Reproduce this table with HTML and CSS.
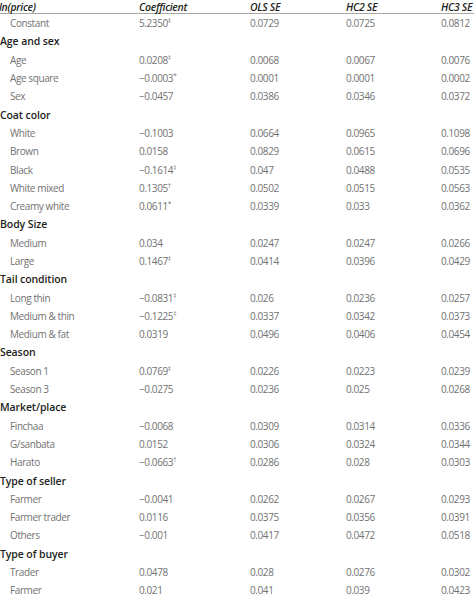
FILE: index.html
```html
<!DOCTYPE html>
<html>
<head>
<meta charset="utf-8">
<link rel="stylesheet" href="styles.css">
</head>
<body>
<div class="table">
  <div class="row head"><div>ln(price)</div><div>Coefficient</div><div>OLS SE</div><div>HC2 SE</div><div>HC3 SE</div></div>
  <div class="row item"><div>Constant</div><div>5.2350<sup>‡</sup></div><div>0.0729</div><div>0.0725</div><div>0.0812</div></div>
  <div class="row cat"><div>Age and sex</div></div>
  <div class="row item"><div>Age</div><div>0.0208<sup>‡</sup></div><div>0.0068</div><div>0.0067</div><div>0.0076</div></div>
  <div class="row item"><div>Age square</div><div>−0.0003<sup>*</sup></div><div>0.0001</div><div>0.0001</div><div>0.0002</div></div>
  <div class="row item"><div>Sex</div><div>−0.0457</div><div>0.0386</div><div>0.0346</div><div>0.0372</div></div>
  <div class="row cat"><div>Coat color</div></div>
  <div class="row item"><div>White</div><div>−0.1003</div><div>0.0664</div><div>0.0965</div><div>0.1098</div></div>
  <div class="row item"><div>Brown</div><div>0.0158</div><div>0.0829</div><div>0.0615</div><div>0.0696</div></div>
  <div class="row item"><div>Black</div><div>−0.1614<sup>‡</sup></div><div>0.047</div><div>0.0488</div><div>0.0535</div></div>
  <div class="row item"><div>White mixed</div><div>0.1305<sup>†</sup></div><div>0.0502</div><div>0.0515</div><div>0.0563</div></div>
  <div class="row item"><div>Creamy white</div><div>0.0611<sup>*</sup></div><div>0.0339</div><div>0.033</div><div>0.0362</div></div>
  <div class="row cat"><div>Body Size</div></div>
  <div class="row item"><div>Medium</div><div>0.034</div><div>0.0247</div><div>0.0247</div><div>0.0266</div></div>
  <div class="row item"><div>Large</div><div>0.1467<sup>‡</sup></div><div>0.0414</div><div>0.0396</div><div>0.0429</div></div>
  <div class="row cat"><div>Tail condition</div></div>
  <div class="row item"><div>Long thin</div><div>−0.0831<sup>‡</sup></div><div>0.026</div><div>0.0236</div><div>0.0257</div></div>
  <div class="row item"><div>Medium &amp; thin</div><div>−0.1225<sup>‡</sup></div><div>0.0337</div><div>0.0342</div><div>0.0373</div></div>
  <div class="row item"><div>Medium &amp; fat</div><div>0.0319</div><div>0.0496</div><div>0.0406</div><div>0.0454</div></div>
  <div class="row cat"><div>Season</div></div>
  <div class="row item"><div>Season 1</div><div>0.0769<sup>‡</sup></div><div>0.0226</div><div>0.0223</div><div>0.0239</div></div>
  <div class="row item"><div>Season 3</div><div>−0.0275</div><div>0.0236</div><div>0.025</div><div>0.0268</div></div>
  <div class="row cat"><div>Market/place</div></div>
  <div class="row item"><div>Finchaa</div><div>−0.0068</div><div>0.0309</div><div>0.0314</div><div>0.0336</div></div>
  <div class="row item"><div>G/sanbata</div><div>0.0152</div><div>0.0306</div><div>0.0324</div><div>0.0344</div></div>
  <div class="row item"><div>Harato</div><div>−0.0663<sup>†</sup></div><div>0.0286</div><div>0.028</div><div>0.0303</div></div>
  <div class="row cat"><div>Type of seller</div></div>
  <div class="row item"><div>Farmer</div><div>−0.0041</div><div>0.0262</div><div>0.0267</div><div>0.0293</div></div>
  <div class="row item"><div>Farmer trader</div><div>0.0116</div><div>0.0375</div><div>0.0356</div><div>0.0391</div></div>
  <div class="row item"><div>Others</div><div>−0.001</div><div>0.0417</div><div>0.0472</div><div>0.0518</div></div>
  <div class="row cat"><div>Type of buyer</div></div>
  <div class="row item"><div>Trader</div><div>0.0478</div><div>0.028</div><div>0.0276</div><div>0.0302</div></div>
  <div class="row item"><div>Farmer</div><div>0.021</div><div>0.041</div><div>0.039</div><div>0.0423</div></div>
</div>
</body>
</html>
```
FILE: styles.css
```css
html, body {
  margin: 0;
  padding: 0;
  background: #fff;
  overflow: hidden;
}
body {
  font-family: "Open Sans", "Noto Sans", sans-serif;
  font-size: 10px;
  letter-spacing: -0.4px;
  color: #727272;
}
.table {
  width: 474px;
}
.row {
  display: grid;
  grid-template-columns: 139px 111px 96px 95px 1fr;
  height: 18.3px;
  align-items: center;
  white-space: nowrap;
}
.row.head {
  box-sizing: border-box;
  height: 14px;
  align-items: end;
  border-bottom: 1px solid #a8a8a8;
  font-style: italic;
  font-weight: 600;
  font-size: 10.5px;
  letter-spacing: -0.3px;
  color: #231f20;
  line-height: 14px;
  padding-bottom: 0;
}
.row.head > div:first-child {
  margin-left: -1px;
}
.row.item > div:first-child {
  padding-left: 10px;
}
.row.cat {
  font-weight: 600;
  letter-spacing: -0.1px;
  font-size: 10.5px;
  color: #231f20;
}
sup {
  font-size: 6.5px;
  line-height: 0;
  vertical-align: 4px;
  letter-spacing: 0;
}
```
